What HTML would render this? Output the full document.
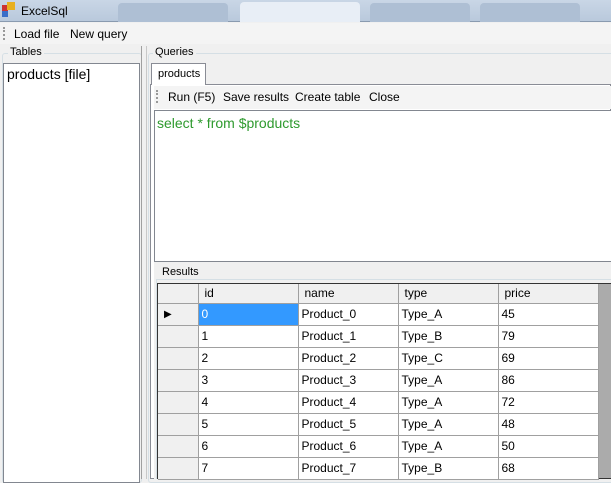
<html><head><style>
*{margin:0;padding:0;box-sizing:border-box}
body{width:611px;height:479px;overflow:hidden;background:#f0f0f0;font-family:"Liberation Sans",sans-serif;font-size:12px;color:#000;position:relative}
.a{position:absolute}
.grid td{border-right:1px solid #a0a0a0;border-bottom:1px solid #a0a0a0;height:22px;padding-left:3px;font-size:12px;background:#fff}
</style></head><body>
<div class="a" style="left:0;top:0;width:611px;height:22px;background:linear-gradient(#c9d6e6,#b9c9dc);border-bottom:1px solid #8a9bb0"></div>
<div class="a" style="left:240px;top:2px;width:120px;height:20px;background:#e8eef6;border-radius:4px 4px 0 0"></div>
<div class="a" style="left:118px;top:3px;width:110px;height:19px;background:#aebfd4;border-radius:4px 4px 0 0"></div>
<div class="a" style="left:370px;top:3px;width:100px;height:19px;background:#aebfd4;border-radius:4px 4px 0 0"></div>
<div class="a" style="left:480px;top:3px;width:100px;height:19px;background:#aebfd4;border-radius:4px 4px 0 0"></div>
<div class="a" style="left:2px;top:5px;width:6px;height:6px;background:#c33"></div>
<div class="a" style="left:7px;top:2px;width:8px;height:8px;background:#e8b020"></div>
<div class="a" style="left:2px;top:11px;width:6px;height:6px;background:#3a6ec8"></div>
<div class="a" style="left:21px;top:4px;font-size:12px">ExcelSql</div>
<div class="a" style="left:0;top:23px;width:611px;height:21px;background:#f4f4f4"></div>
<div class="a" style="left:3px;top:27px;width:2px;height:13px;border-left:2px dotted #999"></div>
<div class="a" style="left:14px;top:27px">Load file</div>
<div class="a" style="left:70px;top:27px">New query</div>
<!-- tables group -->
<div class="a" style="left:2px;top:53px;width:140px;height:430px;border:1px solid #d5dfe5;border-radius:3px"></div>
<div class="a" style="left:8px;top:46px;background:#f0f0f0;padding:0 2px;font-size:11px">Tables</div>
<div class="a" style="left:3px;top:63px;width:137px;height:420px;background:#fff;border:1px solid #828790"></div>
<div class="a" style="left:7px;top:66px;font-size:14px">products [file]</div>
<div class="a" style="left:141px;top:46px;width:1px;height:433px;background:#a0a0a0"></div>
<div class="a" style="left:146px;top:46px;width:1px;height:433px;background:#c8c8c8"></div>
<!-- queries -->
<div class="a" style="left:148px;top:53px;width:470px;height:430px;border:1px solid #d5dfe5;border-radius:3px"></div>
<div class="a" style="left:153px;top:46px;background:#f0f0f0;padding:0 2px;font-size:11px">Queries</div>
<div class="a" style="left:150px;top:84px;width:461px;height:395px;background:#fff;border:1px solid #898c95"></div>
<div class="a" style="left:151px;top:63px;width:55px;height:22px;background:#fff;border:1px solid #898c95;border-bottom:none;font-size:11px;padding:4px 0 0 6px">products</div>
<div class="a" style="left:154px;top:86px;width:457px;height:23px;background:#f4f4f4"></div>
<div class="a" style="left:156px;top:90px;height:13px;border-left:2px dotted #999"></div>
<div class="a" style="left:168px;top:90px">Run (F5)</div>
<div class="a" style="left:223px;top:90px">Save results</div>
<div class="a" style="left:295px;top:90px">Create table</div>
<div class="a" style="left:369px;top:90px">Close</div>
<div class="a" style="left:154px;top:110px;width:457px;height:152px;background:#fff;border:1px solid #828790;border-right:none"></div>
<div class="a" style="left:157px;top:115px;font-size:14px;color:#2e9a2e">select * from $products</div>
<div class="a" style="left:154px;top:262px;width:457px;height:217px;background:#f0f0f0"></div>
<div class="a" style="left:156px;top:279px;width:460px;height:200px;border:1px solid #d5dfe5"></div>
<div class="a" style="left:160px;top:266px;background:#f0f0f0;padding:0 2px;font-size:11px">Results</div>
<div class="a" style="left:157px;top:283px;width:454px;height:196px;background:#ababab;border:1px solid #333;border-right:none"></div>
<table class="a grid" style="left:158px;top:284px;border-collapse:collapse">
<tr><td style="width:40px;height:19px;background:#f0f0f0"></td><td style="width:100px;height:19px;background:#f0f0f0;padding-left:6px">id</td><td style="width:100px;height:19px;background:#f0f0f0;padding-left:6px">name</td><td style="width:100px;height:19px;background:#f0f0f0;padding-left:6px">type</td><td style="width:100px;height:19px;background:#f0f0f0;padding-left:6px">price</td></tr>
<tr><td style="background:#f0f0f0;padding-left:6px;font-size:10px">&#9654;</td><td style="background:#3399ff;color:#fff">0</td><td>Product_0</td><td>Type_A</td><td>45</td></tr>
<tr><td style="background:#f0f0f0"></td><td>1</td><td>Product_1</td><td>Type_B</td><td>79</td></tr>
<tr><td style="background:#f0f0f0"></td><td>2</td><td>Product_2</td><td>Type_C</td><td>69</td></tr>
<tr><td style="background:#f0f0f0"></td><td>3</td><td>Product_3</td><td>Type_A</td><td>86</td></tr>
<tr><td style="background:#f0f0f0"></td><td>4</td><td>Product_4</td><td>Type_A</td><td>72</td></tr>
<tr><td style="background:#f0f0f0"></td><td>5</td><td>Product_5</td><td>Type_A</td><td>48</td></tr>
<tr><td style="background:#f0f0f0"></td><td>6</td><td>Product_6</td><td>Type_A</td><td>50</td></tr>
<tr><td style="background:#f0f0f0"></td><td>7</td><td>Product_7</td><td>Type_B</td><td>68</td></tr>
</table>
</body></html>
